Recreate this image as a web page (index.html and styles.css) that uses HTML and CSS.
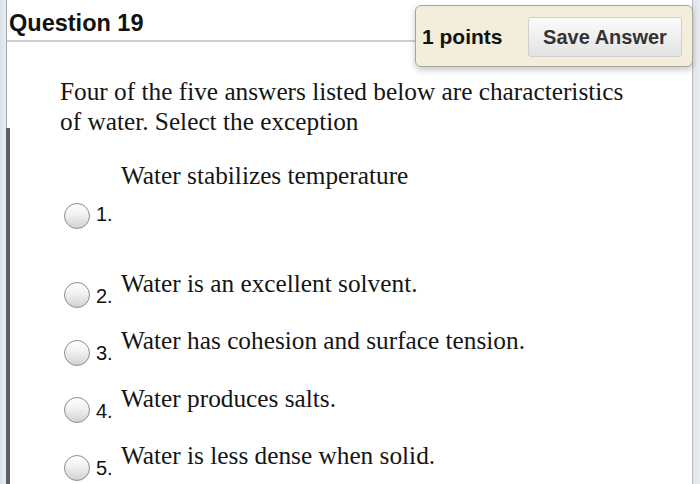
FILE: index.html
```html
<!DOCTYPE html>
<html>
<head>
<meta charset="utf-8">
<link rel="stylesheet" href="styles.css">
</head>
<body>
<div class="frame">
  <div class="gutter-left"></div>
  <div class="rail"></div>
  <div class="thumb"></div>
  <main class="main">
    <header class="q-header">
      <h1 class="q-title">Question 19</h1>
    </header>
    <div class="points-box">
      <span class="points">1 points</span>
      <button class="save-btn">Save Answer</button>
    </div>
    <p class="q-text">Four of the five answers listed below are characteristics of water. Select the exception</p>
    <div class="opt-first">
      <p class="opt-text-block">Water stabilizes temperature</p>
      <div class="opt-first-row">
        <span class="radio"></span>
        <span class="num num-first">1.</span>
      </div>
    </div>
    <div class="options">
      <div class="opt">
        <span class="radio radio-row"></span>
        <span class="num">2.</span>
        <span class="opt-text">Water is an excellent solvent.</span>
      </div>
      <div class="opt">
        <span class="radio radio-row"></span>
        <span class="num">3.</span>
        <span class="opt-text">Water has cohesion and surface tension.</span>
      </div>
      <div class="opt">
        <span class="radio radio-row"></span>
        <span class="num">4.</span>
        <span class="opt-text">Water produces salts.</span>
      </div>
      <div class="opt">
        <span class="radio radio-row"></span>
        <span class="num">5.</span>
        <span class="opt-text">Water is less dense when solid.</span>
      </div>
    </div>
  </main>
  <div class="gutter-right"></div>
</div>
</body>
</html>
```

FILE: styles.css
```css
html, body {
  margin: 0;
  padding: 0;
  background: #ffffff;
}

.frame {
  display: flex;
  width: 700px;
  height: 484px;
  overflow: hidden;
  position: relative;
}

.gutter-left {
  width: 6px;
  flex: none;
  background: linear-gradient(90deg, #d9e3e7, #e7eef0);
}

.rail {
  width: 1px;
  flex: none;
  background: #a8abad;
}

.thumb {
  position: absolute;
  left: 6px;
  top: 128px;
  width: 4px;
  bottom: 0;
  background: #5e5f60;
}

.main {
  flex: 1;
  position: relative;
  border-right: 1px solid #b9bcbd;
  font-family: "Liberation Serif", "Times New Roman", serif;
  color: #151515;
}

.gutter-right {
  width: 7px;
  flex: none;
  background: linear-gradient(90deg, #dfe6e8, #e8eef0);
}

.q-header {
  padding: 9px 0 3px 2px;
  border-bottom: 2px solid #cfd0d0;
}

.q-title {
  margin: 0;
  font-family: "Liberation Sans", Arial, sans-serif;
  font-weight: bold;
  font-size: 23.5px;
  line-height: 28px;
  color: #111;
}

.points-box {
  position: absolute;
  left: 408px;
  top: 5px;
  width: 278px;
  height: 62px;
  box-sizing: border-box;
  display: flex;
  align-items: center;
  padding: 1px 10px 0 6px;
  background: #f3eedb;
  border: 1px solid #aaa69c;
  border-radius: 6px;
  box-shadow: 0 3px 6px rgba(0, 0, 0, 0.22);
}

.points {
  font-family: "Liberation Sans", Arial, sans-serif;
  font-weight: bold;
  font-size: 21px;
  line-height: 24px;
  color: #111;
}

.save-btn {
  margin-left: auto;
  width: 154px;
  height: 40px;
  box-sizing: border-box;
  padding: 0;
  border: 1px solid #cfcfcf;
  border-radius: 3px;
  background: linear-gradient(#fbfbfb, #ededed 60%, #e2e2e2);
  font-family: "Liberation Sans", Arial, sans-serif;
  font-weight: bold;
  font-size: 20px;
  line-height: 38px;
  color: #333;
  text-align: center;
}

.q-text {
  margin: 33.5px 0 0 53px;
  width: 578px;
  font-size: 25.3px;
  line-height: 30px;
}

.opt-first {
  margin-top: 25px;
}

.opt-text-block {
  margin: 0 0 0 114px;
  font-size: 25.3px;
  line-height: 28px;
}

.opt-first-row {
  display: flex;
  align-items: flex-start;
  margin-top: 14.5px;
}

.radio {
  width: 26px;
  height: 26px;
  box-sizing: border-box;
  flex: none;
  margin-left: 57px;
  border-radius: 50%;
  border: 1.5px solid #8d8d8d;
  background: linear-gradient(#ffffff, #f0f0f0 45%, #d2d2d2);
}

.num {
  margin-left: 6px;
  font-family: "Liberation Sans", Arial, sans-serif;
  font-size: 20px;
  line-height: 20px;
  color: #111;
  width: 25px;
  flex: none;
}

.num-first {
  margin-top: 1px;
}

.options {
  margin-top: 39.5px;
}

.opt {
  display: flex;
  align-items: flex-start;
  height: 39.5px;
  margin-bottom: 18px;
}

.radio-row {
  margin-top: 13.5px;
}

.opt .num {
  margin-top: 17px;
}

.opt-text {
  font-size: 25.3px;
  line-height: 28px;
}
```
